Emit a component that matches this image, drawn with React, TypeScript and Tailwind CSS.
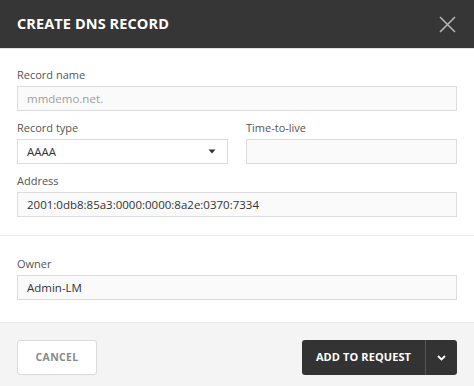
const font = { fontFamily: '"Open Sans", "Noto Sans", Arial, sans-serif' };

function Label({ children }: { children: React.ReactNode }) {
  return <div className="text-[11px] leading-[14px] text-[#555] mb-[4px]">{children}</div>;
}

function Field({ value, placeholder }: { value?: string; placeholder?: string }) {
  return (
    <div className="h-[25px] border border-[#dcdcdc] bg-[#fafafa] px-[9px] flex items-center text-[11.5px]">
      {value ? (
        <span className="text-[#333]">{value}</span>
      ) : (
        <span className="text-[#a0a0a0]">{placeholder}</span>
      )}
    </div>
  );
}

export default function App() {
  return (
    <div className="w-[474px] h-[386px] overflow-hidden bg-white flex flex-col" style={font}>
      <div className="h-[48px] bg-[#363636] flex items-center justify-between pl-[17px] pr-[18px] shrink-0">
        <h1 className="text-white font-bold text-[14.5px] tracking-[0.1px]">CREATE DNS RECORD</h1>
        <svg width="17" height="17" viewBox="0 0 17 17">
          <path d="M1 1 L16 16 M16 1 L1 16" stroke="#b5b5b5" strokeWidth="1.6" />
        </svg>
      </div>
      <div className="h-[1px] bg-[#e2e2e2]" />

      <div className="px-[17px] pt-[19px] pb-[18px] flex flex-col gap-[10px] border-b border-[#ececec]">
        <div>
          <Label>Record name</Label>
          <Field placeholder="mmdemo.net." />
        </div>
        <div className="grid grid-cols-2 gap-[18px]">
          <div>
            <Label>Record type</Label>
            <div className="h-[25px] border border-[#dcdcdc] bg-white px-[9px] flex items-center justify-between text-[11.5px] text-[#333]">
              <span>AAAA</span>
              <svg width="8" height="5" viewBox="0 0 8 5" className="mr-[2px]">
                <path d="M0.5 0.5 L7.5 0.5 L4 4.5 Z" fill="#333" />
              </svg>
            </div>
          </div>
          <div>
            <Label>Time-to-live</Label>
            <Field />
          </div>
        </div>
        <div>
          <Label>Address</Label>
          <Field value="2001:0db8:85a3:0000:0000:8a2e:0370:7334" />
        </div>
      </div>

      <div className="px-[17px] pt-[21px] pb-[22px]">
        <Label>Owner</Label>
        <Field value="Admin-LM" />
      </div>

      <div className="flex-1 bg-[#f4f4f4] border-t border-[#ececec] px-[17px] pt-[17px] flex items-start justify-between">
        <button className="w-[80px] h-[35px] bg-white border border-[#dadada] rounded-[3px] text-[10.5px] font-bold text-[#8a8a8a] tracking-[0.3px]">
          CANCEL
        </button>
        <div className="flex h-[35px] rounded-[3px] bg-[#333] overflow-hidden">
          <button className="w-[123px] text-white font-bold text-[11px] tracking-[0.1px]">ADD TO REQUEST</button>
          <div className="w-[1px] bg-[#555]" />
          <button className="w-[31px] flex items-center justify-center">
            <svg width="9" height="6" viewBox="0 0 9 6">
              <path d="M1 1 L4.5 4.5 L8 1" stroke="white" strokeWidth="1.8" fill="none" />
            </svg>
          </button>
        </div>
      </div>
    </div>
  );
}
